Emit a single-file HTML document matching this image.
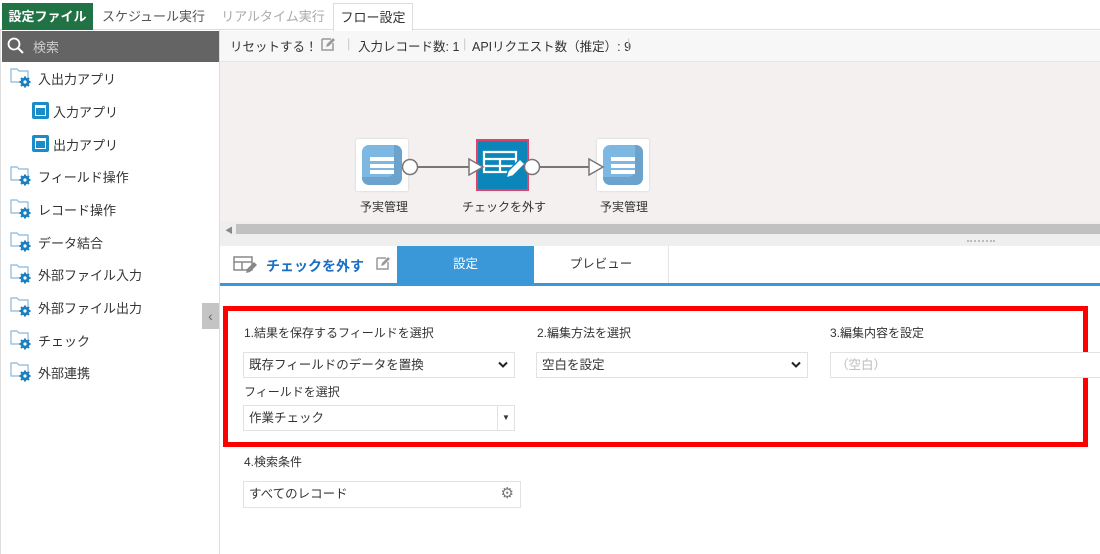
<!DOCTYPE html>
<html><head><meta charset="utf-8"><style>
*{box-sizing:border-box;margin:0;padding:0}
body{width:1100px;height:554px;overflow:hidden;background:#fff;font-family:"Liberation Sans","Noto Sans CJK JP",sans-serif;font-size:13px;color:#333;position:relative}
.a{position:absolute}
.tab{position:absolute;top:3px;height:27px;line-height:27px;font-size:13px;text-align:center}
.fold{position:absolute;left:10px;width:150px;height:24px}
.fold span{position:absolute;left:28px;top:3px;font-size:13px;color:#333}
.lbl{position:absolute;font-size:12px;color:#333}
.sel{position:absolute;height:26px;border:1px solid #e2e2e2;background:#fff;font-size:12.5px;line-height:24px;padding-left:5px;color:#333}
.chev{position:absolute;right:6px;top:8px}
</style></head><body>
<div class="a" style="left:0;top:0;width:1100px;height:30px;background:#fff;border-bottom:1px solid #ddd"></div>
<div class="tab" style="left:2px;width:91px;background:#217346;color:#fff;font-weight:bold">設定ファイル</div>
<div class="tab" style="left:95px;width:117px;color:#555">スケジュール実行</div>
<div class="tab" style="left:214px;width:118px;color:#aaa">リアルタイム実行</div>
<div class="tab" style="left:333px;width:80px;height:28px;background:#fff;border:1px solid #ddd;border-bottom:none;color:#333">フロー設定</div>
<div class="a" style="left:0;top:30px;width:220px;height:524px;background:#fff;border-right:1px solid #ddd;border-left:1px solid #ddd"></div>
<div class="a" style="left:2px;top:31px;width:217px;height:31px;background:#646464"></div>
<svg class="a" style="left:7px;top:37px" width="18" height="18" viewBox="0 0 18 18"><circle cx="7" cy="7" r="5.5" fill="none" stroke="#fff" stroke-width="1.8"/><path d="M11 11l5 5" stroke="#fff" stroke-width="2"/></svg>
<div class="a" style="left:33px;top:37px;color:#ccc;font-size:13px">検索</div>
<svg width="0" height="0" style="position:absolute"><defs><g id="fi"><path d="M1 3h6l2 2h9v11H1z" fill="#fff" stroke="#8ab8dc" stroke-width="1.2"/><circle cx="15" cy="16" r="4.5" fill="#1a7fc1"/><circle cx="15" cy="16" r="1.6" fill="#fff"/><path d="M15 10.5v3M15 18.5v3M9.5 16h3M17.5 16h3M11 12l2 2M17 18l2 2M19 12l-2 2M13 18l-2 2" stroke="#1a7fc1" stroke-width="2"/></g>
<g id="ed"><path d="M1 2h9M1 2v11h11V6" fill="none" stroke="#999" stroke-width="1.5"/><path d="M5 10l1-3 6-6 2 2-6 6z" fill="#999"/></g></defs></svg>
<div class="fold" style="top:66px"><svg width="24" height="24"><use href="#fi"/></svg><span>入出力アプリ</span></div>
<div class="a" style="left:32px;top:102px;width:17px;height:17px;background:#1a8cc8;border-radius:2px"><div class="a" style="left:3px;top:3px;width:11px;height:11px;border:1.5px solid #fff;border-top-width:3px"></div></div>
<div class="a" style="left:53px;top:102px">入力アプリ</div>
<div class="a" style="left:32px;top:135px;width:17px;height:17px;background:#1a8cc8;border-radius:2px"><div class="a" style="left:3px;top:3px;width:11px;height:11px;border:1.5px solid #fff;border-top-width:3px"></div></div>
<div class="a" style="left:53px;top:135px">出力アプリ</div>
<div class="fold" style="top:164px"><svg width="24" height="24"><use href="#fi"/></svg><span>フィールド操作</span></div>
<div class="fold" style="top:197px"><svg width="24" height="24"><use href="#fi"/></svg><span>レコード操作</span></div>
<div class="fold" style="top:230px"><svg width="24" height="24"><use href="#fi"/></svg><span>データ結合</span></div>
<div class="fold" style="top:262px"><svg width="24" height="24"><use href="#fi"/></svg><span>外部ファイル入力</span></div>
<div class="fold" style="top:295px"><svg width="24" height="24"><use href="#fi"/></svg><span>外部ファイル出力</span></div>
<div class="fold" style="top:328px"><svg width="24" height="24"><use href="#fi"/></svg><span>チェック</span></div>
<div class="fold" style="top:360px"><svg width="24" height="24"><use href="#fi"/></svg><span>外部連携</span></div>
<div class="a" style="left:202px;top:303px;width:17px;height:26px;background:#c4c4c4;color:#666;text-align:center;line-height:26px;font-size:14px">‹</div>
<div class="a" style="left:220px;top:31px;width:880px;height:31px;background:#f7f7f7;border-bottom:1px solid #e5e5e5"></div>
<div class="a" style="left:230px;top:36px;font-size:12.5px">リセットする！</div>
<svg class="a" style="left:321px;top:37px" width="15" height="15"><use href="#ed"/></svg>
<div class="a" style="left:347px;top:36px;color:#ccc">|</div>
<div class="a" style="left:358px;top:36px;font-size:12.5px">入力レコード数: 1</div>
<div class="a" style="left:463px;top:36px;color:#ccc">|</div>
<div class="a" style="left:472px;top:36px;font-size:12.5px">APIリクエスト数（推定）: 9</div>
<div class="a" style="left:627px;top:36px;color:#ccc">|</div>
<div class="a" style="left:220px;top:62px;width:880px;height:161px;background:#f3f0ef"></div>
<div class="a" style="left:412px;top:166px;width:65px;height:1.5px;background:#777"></div>
<div class="a" style="left:535px;top:166px;width:65px;height:1.5px;background:#777"></div>
<div class="a" style="left:356px;top:139px;width:52px;height:52px;background:#fff;border-radius:2px;box-shadow:0 0 2px #ccc"></div>
<div class="a" style="left:362px;top:145px;width:40px;height:40px;background:#7db8e2;border-radius:7px;box-shadow:inset -8px -8px 0 rgba(60,100,140,.25)"></div>
<div class="a" style="left:370px;top:157px;width:24px;height:17px;border-top:4px solid #fff;border-bottom:4px solid #fff"><div style="margin-top:2.5px;height:4px;background:#fff"></div></div>
<div class="a" style="left:597px;top:139px;width:52px;height:52px;background:#fff;border-radius:2px;box-shadow:0 0 2px #ccc"></div>
<div class="a" style="left:603px;top:145px;width:40px;height:40px;background:#7db8e2;border-radius:7px;box-shadow:inset -8px -8px 0 rgba(60,100,140,.25)"></div>
<div class="a" style="left:611px;top:157px;width:24px;height:17px;border-top:4px solid #fff;border-bottom:4px solid #fff"><div style="margin-top:2.5px;height:4px;background:#fff"></div></div>
<div class="a" style="left:476px;top:139px;width:53px;height:52px;background:#0a86bb;border:2px solid #e0436a"></div>
<svg class="a" style="left:480px;top:148px" width="46" height="36"><path d="M4 4h32v20H4zM4 11h32M20 11v13M4 18h32" fill="none" stroke="#fff" stroke-width="2.2"/><path d="M26 30l2-7 12-12 5 5-12 12z" fill="#fff" stroke="#0a86bb" stroke-width="1.5"/></svg>
<svg class="a" style="left:400px;top:157px" width="20" height="20"><circle cx="10" cy="10" r="7.5" fill="#fff" stroke="#777" stroke-width="1.5"/></svg>
<svg class="a" style="left:522px;top:157px" width="20" height="20"><circle cx="10" cy="10" r="7.5" fill="#fff" stroke="#777" stroke-width="1.5"/></svg>
<svg class="a" style="left:468px;top:158px" width="18" height="18"><path d="M1 1l14 8-14 8z" fill="#fff" stroke="#777" stroke-width="1.5"/></svg>
<svg class="a" style="left:588px;top:158px" width="18" height="18"><path d="M1 1l14 8-14 8z" fill="#fff" stroke="#777" stroke-width="1.5"/></svg>
<div class="a" style="left:360px;top:198px;font-size:12px">予実管理</div>
<div class="a" style="left:462px;top:198px;font-size:12px">チェックを外す</div>
<div class="a" style="left:600px;top:198px;font-size:12px">予実管理</div>
<div class="a" style="left:220px;top:222px;width:880px;height:14px;background:#eee"></div>
<div class="a" style="left:236px;top:224px;width:864px;height:10px;background:#c1c1c1"></div>
<div class="a" style="left:225px;top:225px;font-size:8px;color:#888">◀</div>
<div class="a" style="left:220px;top:236px;width:880px;height:10px;background:#efefef"></div>
<div class="a" style="left:967px;top:240px;width:28px;height:2px;border-top:2px dotted #bbb"></div>
<div class="a" style="left:220px;top:246px;width:880px;height:37px;background:#fff"></div>
<div class="a" style="left:220px;top:283px;width:880px;height:3px;background:#3a98d8"></div>
<svg class="a" style="left:233px;top:255px" width="24" height="20"><path d="M1 2h18v13H1zM1 7h18M9 7v8" fill="none" stroke="#888" stroke-width="1.5"/><path d="M13 18l1-4 7-7 3 3-7 7z" fill="#888"/></svg>
<div class="a" style="left:266px;top:256px;font-size:14px;font-weight:bold;color:#1a6fc4">チェックを外す</div>
<svg class="a" style="left:376px;top:256px" width="15" height="15"><use href="#ed"/></svg>
<div class="a" style="left:397px;top:246px;width:137px;height:37px;background:#3a98d8;color:#fff;text-align:center;line-height:37px;font-size:12.5px">設定</div>
<div class="a" style="left:534px;top:246px;width:135px;height:37px;border-right:1px solid #e5e5e5;text-align:center;line-height:37px;font-size:12.5px">プレビュー</div>
<div class="a" style="left:223px;top:306px;width:865px;height:141px;border:5px solid #f00"></div>
<div class="lbl" style="left:244px;top:324px">1.結果を保存するフィールドを選択</div>
<div class="lbl" style="left:537px;top:324px">2.編集方法を選択</div>
<div class="lbl" style="left:830px;top:324px">3.編集内容を設定</div>
<div class="sel" style="left:243px;top:352px;width:272px">既存フィールドのデータを置換<svg class="chev" width="10" height="8"><path d="M1 1.5l4 4 4-4" fill="none" stroke="#222" stroke-width="2"/></svg></div>
<div class="sel" style="left:536px;top:352px;width:272px">空白を設定<svg class="chev" width="10" height="8"><path d="M1 1.5l4 4 4-4" fill="none" stroke="#222" stroke-width="2"/></svg></div>
<div class="sel" style="left:830px;top:352px;width:270px;color:#bbb;border-right:none">（空白）</div>
<div class="lbl" style="left:244px;top:383px">フィールドを選択</div>
<div class="sel" style="left:243px;top:405px;width:272px">作業チェック<span class="a" style="right:0;top:0;width:17px;height:24px;border-left:1px solid #e2e2e2;text-align:center;font-size:8px">▼</span></div>
<div class="lbl" style="left:244px;top:453px">4.検索条件</div>
<div class="sel" style="left:243px;top:481px;width:278px;height:27px">すべてのレコード<span class="a" style="right:6px;top:0;font-size:15px;color:#777">⚙</span></div>
</body></html>
